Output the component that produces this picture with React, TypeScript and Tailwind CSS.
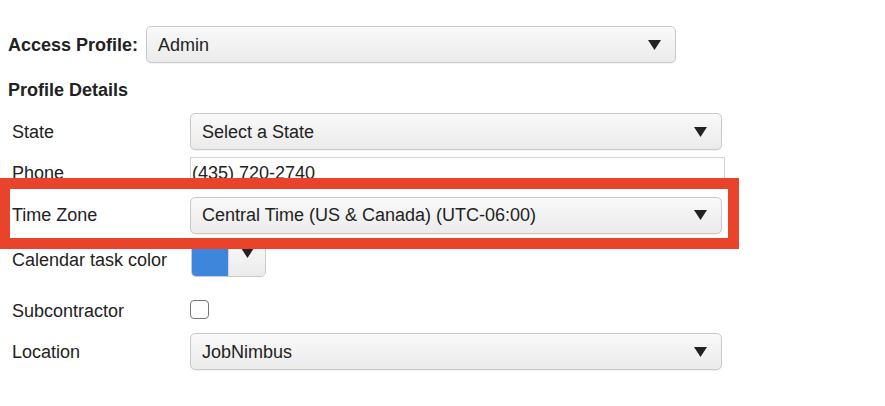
import React from "react";

const Caret = () => (
  <svg width="13" height="10" viewBox="0 0 13 10" className="shrink-0">
    <path d="M0 0 L13 0 L6.5 10 Z" fill="#222" />
  </svg>
);

const SelectBox = ({ value, width }: { value: string; width: string }) => (
  <div
    className={`${width} h-[37px] flex items-center justify-between pl-[11px] pr-[14px] rounded-[5px] border border-[#c9c9c9] bg-gradient-to-b from-[#f9f9f9] to-[#ebebeb] shadow-[0_1px_1px_rgba(0,0,0,0.06)]`}
  >
    <span className="text-[18px] leading-none text-[#222]">{value}</span>
    <Caret />
  </div>
);

const Row = ({
  label,
  children,
  className = "",
  labelClass = "",
}: {
  label: string;
  children: React.ReactNode;
  className?: string;
  labelClass?: string;
}) => (
  <div className={`flex items-center ${className}`}>
    <div className={`w-[178px] shrink-0 text-[18px] leading-none text-[#222] ${labelClass}`}>{label}</div>
    {children}
  </div>
);

export default function App() {
  return (
    <div className="min-h-screen bg-white font-['Liberation_Sans',Arial,sans-serif] text-[#222]">
      <div className="pt-[26px] pl-[8px]">
        {/* Access profile */}
        <div className="flex items-center">
          <div className="w-[138px] shrink-0 text-[18px] font-bold leading-none">Access Profile:</div>
          <SelectBox value="Admin" width="w-[530px]" />
        </div>

        <h2 className="mt-[17px] text-[18px] font-bold leading-[20px]">Profile Details</h2>

        <div className="mt-[13px] pl-[4px]">
          <Row label="State" className="h-[37px]">
            <SelectBox value="Select a State" width="w-[532px]" />
          </Row>

          <Row label="Phone" className="mt-[7px] h-[32px]">
            <div className="w-[535px] h-[32px] flex items-center pl-[1px] border border-[#d4d4d4] bg-white text-[18px] leading-none">
              (435) 720-2740
            </div>
          </Row>

          {/* highlighted row */}
          <div className="relative z-10 ml-[-12px] mt-[-11px] w-[739px] border-[11px] border-l-[10px] border-[#e9432b] bg-white pt-[8px] pb-[5px] pl-[2px]">
            <Row label="Time Zone" className="h-[36px]">
              <SelectBox value="Central Time (US & Canada) (UTC-06:00)" width="w-[532px]" />
            </Row>
          </div>

          <Row label="Calendar task color" className="mt-[-8px] h-[36px]" labelClass="pt-[2px]">
            <div className="flex w-[75px] h-[36px] ml-[1px] rounded-[5px] border border-[#c9c9c9] overflow-hidden">
              <div className="w-[36px] bg-[#3d86dc]" />
              <div className="flex-1 flex justify-center pt-[6px] bg-gradient-to-b from-[#f9f9f9] to-[#ebebeb] border-l border-[#d6d6d6]">
                <Caret />
              </div>
            </div>
          </Row>

          <Row label="Subcontractor" className="mt-[14px] h-[36px]" labelClass="pt-[3px]">
            <div className="w-[19px] h-[19px] rounded-[4px] border-[1.5px] border-[#767676] bg-white" />
          </Row>

          <Row label="Location" className="mt-[6px] h-[37px]" labelClass="pt-[1px]">
            <SelectBox value="JobNimbus" width="w-[532px]" />
          </Row>
        </div>
      </div>
    </div>
  );
}
